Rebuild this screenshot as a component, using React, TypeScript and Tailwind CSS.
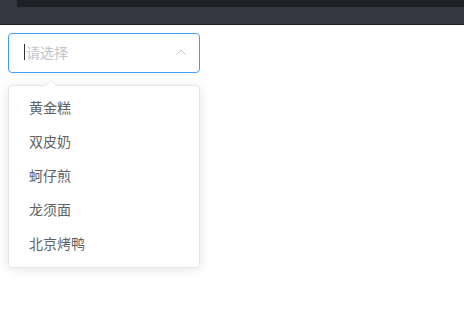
import React from "react";

const items = ["黄金糕", "双皮奶", "蚵仔煎", "龙须面", "北京烤鸭"];

export default function App() {
  return (
    <div
      className="w-[464px] h-[327px] bg-white relative overflow-hidden"
      style={{ fontFamily: '"Noto Sans CJK SC", "Noto Sans", sans-serif' }}
    >
      <div className="h-[7px] bg-[#1f2024] flex">
        <div className="w-[17px] bg-[#343642]" />
      </div>
      <div className="h-[17px] bg-[#343642]" />
      <div className="h-[1px] bg-[#1a1b1f]" />
      <div className="pl-[8px] pt-[8px] w-[200px]">
        <div className="relative h-[40px] w-[192px] border border-[#409eff] rounded-[4px] flex items-center pl-[15px] pr-[15px] pb-[2px]">
          <span className="w-[1px] h-[16px] bg-[#303133] mr-[1px]" />
          <span className="text-[14px] text-[#c0c4cc] leading-none">请选择</span>
          <svg
            className="absolute right-[11px] top-[11px]"
            width="14"
            height="14"
            viewBox="0 0 14 14"
            fill="none"
          >
            <path d="M2.5 9.5 L7 5 L11.5 9.5" stroke="#c0c4cc" strokeWidth="1" />
          </svg>
        </div>
        <div className="relative mt-[12px] w-[192px] border border-[#e4e7ed] rounded-[4px] bg-white shadow-[0_2px_12px_rgba(0,0,0,0.1)] pt-[4px] pb-[7px]">
          <div className="absolute -top-[6px] left-[36px] w-0 h-0 border-l-[6px] border-r-[6px] border-b-[6px] border-l-transparent border-r-transparent border-b-[#e4e7ed]" />
          <div className="absolute -top-[5px] left-[36px] w-0 h-0 border-l-[6px] border-r-[6px] border-b-[6px] border-l-transparent border-r-transparent border-b-white" />
          {items.map((t) => (
            <div
              key={t}
              className="h-[34px] px-[20px] flex items-center text-[14px] text-[#606266]"
            >
              {t}
            </div>
          ))}
        </div>
      </div>
    </div>
  );
}
